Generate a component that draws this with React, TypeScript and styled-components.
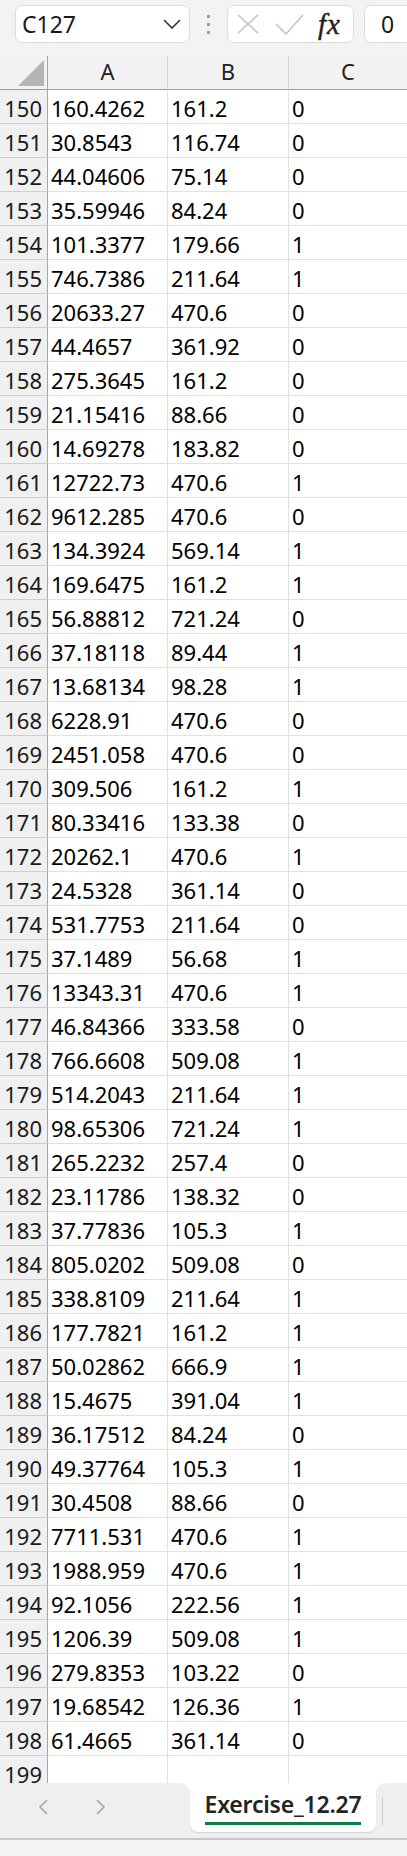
import React from 'react'
import styled, { createGlobalStyle } from 'styled-components'

const GlobalStyle = createGlobalStyle`
  html, body {
    margin: 0;
    padding: 0;
    background: #f3f3f3;
    font-family: "Noto Sans", "Open Sans", sans-serif;
    color: #000;
  }
  * {
    box-sizing: border-box;
  }
`

const Page = styled.div`
  width: 407px;
  height: 1856px;
  overflow: hidden;
  display: flex;
  flex-direction: column;
`

const FormulaBar = styled.div`
  height: 56px;
  flex-shrink: 0;
  display: flex;
  align-items: flex-start;
  padding: 5px 0 0 15px;
  overflow: hidden;
`

const Box = styled.div`
  height: 38px;
  flex-shrink: 0;
  background: #fff;
  border: 1px solid #dcdcdc;
  border-radius: 7px;
  display: flex;
  align-items: center;
`

const NameBox = styled(Box)`
  width: 175px;
  padding: 0 8px 0 6px;
  justify-content: space-between;
  font-size: 23px;
  color: #1a1a1a;
`

const Grip = styled.div`
  width: 37px;
  height: 38px;
  flex-shrink: 0;
  display: flex;
  flex-direction: column;
  align-items: center;
  justify-content: center;
  gap: 5px;
`

const GripDot = styled.span`
  width: 3px;
  height: 3px;
  background: #9e9e9e;
`

const FxBox = styled(Box)`
  width: 127px;
  padding-left: 9px;
  gap: 16px;
`

const FxLabel = styled.span`
  font-family: "Liberation Serif", "DejaVu Serif", serif;
  font-style: italic;
  font-size: 29px;
  color: #1f1f1f;
  margin-left: -2px;
  letter-spacing: 1px;
  -webkit-text-stroke: 0.4px #1f1f1f;
`

const ValueBox = styled(Box)`
  width: 90px;
  margin-left: 10px;
  padding-left: 16px;
  font-size: 23px;
  color: #1a1a1a;
`

const Sheet = styled.div`
  height: 1727px;
  flex-shrink: 0;
  overflow: hidden;
  background: #fff;
`

const Row = styled.div`
  display: grid;
  grid-template-columns: 48px 120px 121px 1fr;
  height: 34px;
`

const HeaderRow = styled(Row)`
  background: #f2f2f2;
`

const Corner = styled.div`
  border-right: 1px solid #a6a6a6;
  border-bottom: 1px solid #9e9e9e;
  display: flex;
  align-items: flex-end;
  justify-content: flex-end;
  padding: 0 3px 3px 0;
`

const ColHeader = styled.div<{ $last?: boolean }>`
  border-right: ${(p) => (p.$last ? 'none' : '1px solid #d4d4d4')};
  border-bottom: 1px solid #9e9e9e;
  text-align: center;
  font-size: 22px;
  line-height: 30px;
  color: #222;
`

const RowHead = styled.div`
  background: #f0f0f0;
  border-right: 1px solid #a6a6a6;
  border-bottom: 1px solid #cfcfcf;
  text-align: right;
  padding: 3px 5px 0 0;
  font-size: 22px;
  line-height: 30px;
  color: #1a1a1a;
`

const Cell = styled.div<{ $last?: boolean }>`
  border-right: ${(p) => (p.$last ? 'none' : '1px solid #e1e1e1')};
  border-bottom: 1px solid #e1e1e1;
  padding: 3px 0 0 3px;
  font-size: 22px;
  line-height: 30px;
  white-space: nowrap;
  overflow: hidden;
`

const TabStrip = styled.div`
  height: 55px;
  flex-shrink: 0;
  display: flex;
  background: linear-gradient(#fff 0 20px, #efefef 20px);
`

const NavPanel = styled.div`
  width: 190px;
  background: #efefef;
  border-top-right-radius: 10px;
  display: flex;
  align-items: center;
  padding: 0 0 8px 38px;
  gap: 48px;
`

const ActiveTab = styled.div`
  width: 186px;
  height: 49px;
  background: #fff;
  border-radius: 0 0 8px 8px;
  box-shadow: 0 1px 1px rgba(0, 0, 0, 0.12);
  display: flex;
  justify-content: center;
  padding-top: 5px;
`

const TabLabel = styled.span`
  font-size: 23px;
  font-weight: 600;
  line-height: 32px;
  color: #242424;
  height: 37px;
  border-bottom: 3px solid #107c41;
  letter-spacing: -0.2px;
`

const RestPanel = styled.div`
  flex: 1;
  background: #efefef;
  border-top-left-radius: 10px;
  display: flex;
  align-items: flex-start;
  padding: 14px 0 0 6px;
`

const TabDivider = styled.span`
  width: 1px;
  height: 28px;
  background: #c8c8c8;
`

const StatusBar = styled.div`
  flex: 1;
  border-top: 2px solid #c7c7c7;
  background: #f3f3f3;
  padding: 8px 0 0 13px;
  font-size: 22px;
  line-height: 30px;
  color: #222;
`

const rows: [number, string, string, string][] = [
  [150, '160.4262', '161.2', '0'],
  [151, '30.8543', '116.74', '0'],
  [152, '44.04606', '75.14', '0'],
  [153, '35.59946', '84.24', '0'],
  [154, '101.3377', '179.66', '1'],
  [155, '746.7386', '211.64', '1'],
  [156, '20633.27', '470.6', '0'],
  [157, '44.4657', '361.92', '0'],
  [158, '275.3645', '161.2', '0'],
  [159, '21.15416', '88.66', '0'],
  [160, '14.69278', '183.82', '0'],
  [161, '12722.73', '470.6', '1'],
  [162, '9612.285', '470.6', '0'],
  [163, '134.3924', '569.14', '1'],
  [164, '169.6475', '161.2', '1'],
  [165, '56.88812', '721.24', '0'],
  [166, '37.18118', '89.44', '1'],
  [167, '13.68134', '98.28', '1'],
  [168, '6228.91', '470.6', '0'],
  [169, '2451.058', '470.6', '0'],
  [170, '309.506', '161.2', '1'],
  [171, '80.33416', '133.38', '0'],
  [172, '20262.1', '470.6', '1'],
  [173, '24.5328', '361.14', '0'],
  [174, '531.7753', '211.64', '0'],
  [175, '37.1489', '56.68', '1'],
  [176, '13343.31', '470.6', '1'],
  [177, '46.84366', '333.58', '0'],
  [178, '766.6608', '509.08', '1'],
  [179, '514.2043', '211.64', '1'],
  [180, '98.65306', '721.24', '1'],
  [181, '265.2232', '257.4', '0'],
  [182, '23.11786', '138.32', '0'],
  [183, '37.77836', '105.3', '1'],
  [184, '805.0202', '509.08', '0'],
  [185, '338.8109', '211.64', '1'],
  [186, '177.7821', '161.2', '1'],
  [187, '50.02862', '666.9', '1'],
  [188, '15.4675', '391.04', '1'],
  [189, '36.17512', '84.24', '0'],
  [190, '49.37764', '105.3', '1'],
  [191, '30.4508', '88.66', '0'],
  [192, '7711.531', '470.6', '1'],
  [193, '1988.959', '470.6', '1'],
  [194, '92.1056', '222.56', '1'],
  [195, '1206.39', '509.08', '1'],
  [196, '279.8353', '103.22', '0'],
  [197, '19.68542', '126.36', '1'],
  [198, '61.4665', '361.14', '0'],
  [199, '', '', ''],
]

const App = () => {
  return (
    <Page>
      <GlobalStyle />
      <FormulaBar>
        <NameBox>
          <span>C127</span>
          <svg width="18" height="10" viewBox="0 0 18 10">
            <path d="M1 1 L9 9 L17 1" fill="none" stroke="#333" strokeWidth="1.6" />
          </svg>
        </NameBox>
        <Grip>
          <GripDot />
          <GripDot />
          <GripDot />
        </Grip>
        <FxBox>
          <svg width="22" height="20" viewBox="0 0 22 20">
            <path d="M1 1 L21 19 M21 1 L1 19" fill="none" stroke="#c4c4c4" strokeWidth="1.6" />
          </svg>
          <svg width="29" height="21" viewBox="0 0 29 21">
            <path d="M1 10 L11 20 L28 1" fill="none" stroke="#c4c4c4" strokeWidth="1.6" />
          </svg>
          <FxLabel>fx</FxLabel>
        </FxBox>
        <ValueBox>0</ValueBox>
      </FormulaBar>

      <Sheet>
        <HeaderRow>
          <Corner>
            <svg width="26" height="26" viewBox="0 0 26 26">
              <path d="M26 0 L26 26 L0 26 Z" fill="#b4b4b4" />
            </svg>
          </Corner>
          <ColHeader>A</ColHeader>
          <ColHeader>B</ColHeader>
          <ColHeader $last>C</ColHeader>
        </HeaderRow>
        {rows.map(([n, a, b, c]) => (
          <Row key={n}>
            <RowHead>{n}</RowHead>
            <Cell>{a}</Cell>
            <Cell>{b}</Cell>
            <Cell $last>{c}</Cell>
          </Row>
        ))}
      </Sheet>

      <TabStrip>
        <NavPanel>
          <svg width="10" height="16" viewBox="0 0 10 16">
            <path d="M9 1 L2 8 L9 15" fill="none" stroke="#a3a3a3" strokeWidth="1.5" />
          </svg>
          <svg width="10" height="16" viewBox="0 0 10 16">
            <path d="M1 1 L8 8 L1 15" fill="none" stroke="#a3a3a3" strokeWidth="1.5" />
          </svg>
        </NavPanel>
        <ActiveTab>
          <TabLabel>Exercise_12.27</TabLabel>
        </ActiveTab>
        <RestPanel>
          <TabDivider />
        </RestPanel>
      </TabStrip>
      <StatusBar>Ready</StatusBar>
    </Page>
  )
}

export default App
